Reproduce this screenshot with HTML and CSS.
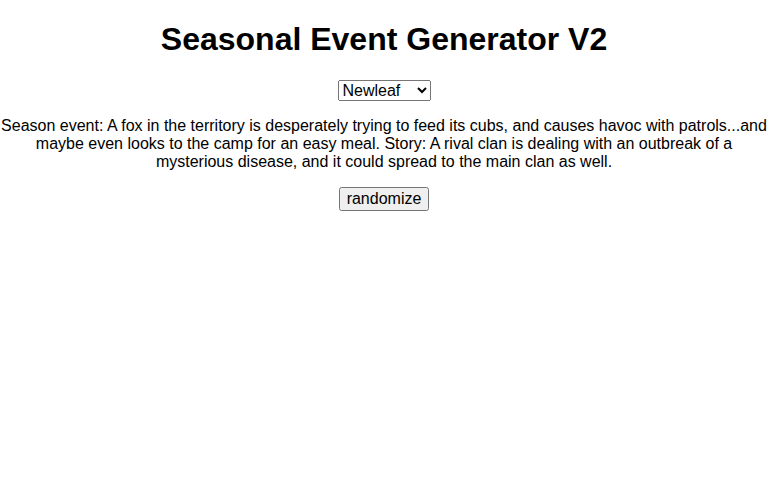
FILE: index.html
```html
<!DOCTYPE html>
<html>
<head>
    <meta charset="utf-8">
    <title>Seasonal Event Generator V2</title>
    <link rel="stylesheet" href="styles.css">
</head>
<body>
<h1>Seasonal Event Generator V2</h1>

<select id="season" class="season">
    <option>Newleaf</option>
    <option>Greenleaf</option>
    <option>Leaf-fall</option>
    <option>Leaf-bare</option>
</select>

<p id="result">Season event: A fox in the territory is desperately trying to feed its cubs, and causes havoc with patrols...and maybe even looks to the camp for an easy meal. Story: A rival clan is dealing with an outbreak of a mysterious disease, and it could spread to the main clan as well.</p>

<button type="button" id="randomize" class="randomize">randomize</button>
</body>
</html>
```

FILE: styles.css
```css
body {
    margin: 0;
    text-align: center;
    font-family: "Liberation Sans", Arial, sans-serif;
    font-size: 16px;
}

h1 {
    font-size: 2em;
    margin: 0.67em 0;
}

.season {
    font-family: "Liberation Sans", Arial, sans-serif;
    font-size: 16px;
}

.randomize {
    font-family: "Liberation Sans", Arial, sans-serif;
    font-size: 16px;
}
```
